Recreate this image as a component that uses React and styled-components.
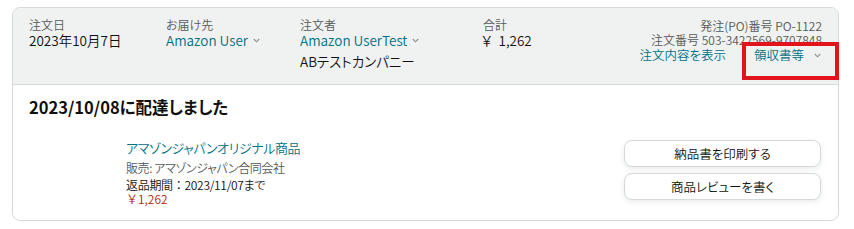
import React from 'react';
import styled, { createGlobalStyle } from 'styled-components';

const GlobalStyle = createGlobalStyle`
  body {
    margin: 0;
    background: #fff;
    font-family: "Noto Sans CJK JP", "DejaVu Sans", sans-serif;
    font-feature-settings: "palt" 1;
    font-weight: 350;
    color: #0f1111;
  }
`

const Page = styled.div`
  position: relative;
  padding: 7px 15px 8px 12px;
`

const Card = styled.div`
  border: 1px solid #d5d9d9;
  border-radius: 8px;
  overflow: hidden;
`

const Header = styled.div`
  display: flex;
  align-items: flex-start;
  background: #f0f2f2;
  border-bottom: 1px solid #d5d9d9;
  height: 77px;
  box-sizing: border-box;
  padding: 10px 16px 0 16px;
`

const Col = styled.div`
  width: ${p => p.w}px;
  display: flex;
  flex-direction: column;
`

const Label = styled.div`
  font-size: 12px;
  line-height: 14px;
  color: #565959;
`

const Value = styled.div`
  font-size: 13.5px;
  line-height: 14px;
  margin-top: ${p => p.mt || 1}px;
  color: ${p => (p.link ? '#007185' : '#0f1111')};
  display: flex;
  align-items: center;
  gap: 5px;
`

// full-width glyphs (￥, ：) keep their normal width
const Wide = styled.span`
  font-feature-settings: normal;
  margin-left: ${p => p.ml || 0}px;
`

const RightCol = styled.div`
  margin-left: auto;
  padding-top: 1px;
  display: flex;
  flex-direction: column;
  align-items: flex-end;
`

const Small = styled.div`
  font-size: 12px;
  line-height: 14px;
  color: #565959;
`

const Links = styled.div`
  display: flex;
  align-items: center;
  gap: 28px;
  margin-top: -1px;
  font-size: 12.5px;
  line-height: 18px;
  color: #007185;
`

const LinkWithMenu = styled.span`
  display: flex;
  align-items: center;
  gap: 10px;
  margin-right: 1px;
`

const Body = styled.div`
  padding: 11px 16px 15px 16px;
`

const Title = styled.h2`
  margin: 0;
  font-size: 16.5px;
  line-height: 22px;
  font-weight: 700;
`

const Row = styled.div`
  display: flex;
  align-items: flex-start;
  margin-top: 21px;
`

const Info = styled.div`
  margin-left: 97px;
  display: flex;
  flex-direction: column;
`

const ProductLink = styled.div`
  font-size: 13px;
  line-height: 18px;
  letter-spacing: -0.4px;
  margin-bottom: 2px;
  color: #007185;
`

const Line = styled.div`
  font-size: ${p => p.fs || 12}px;
  line-height: ${p => p.lh || 17}px;
  letter-spacing: ${p => p.ls || 0}px;
  color: ${p => p.color || '#0f1111'};
`

const Actions = styled.div`
  margin-left: auto;
  margin-right: 1px;
  margin-top: 1px;
  display: flex;
  flex-direction: column;
  gap: 6px;
`

const Button = styled.button`
  width: 197px;
  height: 27px;
  border: 1px solid #d5d9d9;
  border-radius: 8px;
  background: #fff;
  box-shadow: 0 2px 5px rgba(213, 217, 217, 0.5);
  font-family: inherit;
  font-feature-settings: "palt" 1;
  font-weight: 350;
  font-size: 12.5px;
  color: #0f1111;
  padding: 0;
`

const Highlight = styled.div`
  position: absolute;
  left: 742px;
  top: 42px;
  width: 97px;
  height: 38px;
  box-sizing: border-box;
  border: 4px solid #e3131b;
  pointer-events: none;
`

const Chevron = () => (
  <svg width="7" height="5" viewBox="0 0 7 5">
    <polyline points="0.8,1 3.5,3.8 6.2,1" fill="none" stroke="#8d9096" strokeWidth="1.1" />
  </svg>
);

export default function App() {
  return (
    <Page>
      <GlobalStyle />
      <Card>
        <Header>
          <Col w={137}>
            <Label>注文日</Label>
            <Value>2023年10月7日</Value>
          </Col>
          <Col w={134}>
            <Label>お届け先</Label>
            <Value link>Amazon User <Chevron /></Value>
          </Col>
          <Col w={183}>
            <Label>注文者</Label>
            <Value link>Amazon UserTest <Chevron /></Value>
            <Value mt={7}>ABテストカンパニー</Value>
          </Col>
          <Col w={120}>
            <Label>合計</Label>
            <Value><Wide ml={-3}>￥</Wide>1,262</Value>
          </Col>
          <RightCol>
            <Small>発注(PO)番号 PO-1122</Small>
            <Small>注文番号 503-3422569-9707848</Small>
            <Links>
              <span>注文内容を表示</span>
              <LinkWithMenu>領収書等 <Chevron /></LinkWithMenu>
            </Links>
          </RightCol>
        </Header>
        <Body>
          <Title>2023/10/08に配達しました</Title>
          <Row>
            <Info>
              <ProductLink>アマゾンジャパンオリジナル商品</ProductLink>
              <Line color="#565959" ls={-0.4}>販売: アマゾンジャパン合同会社</Line>
              <Line ls={-0.3}>返品期間<Wide>：</Wide>2023/11/07まで</Line>
              <Line color="#b12704" lh={12}><Wide>￥</Wide>1,262</Line>
            </Info>
            <Actions>
              <Button>納品書を印刷する</Button>
              <Button>商品レビューを書く</Button>
            </Actions>
          </Row>
        </Body>
      </Card>
      <Highlight />
    </Page>
  );
}
